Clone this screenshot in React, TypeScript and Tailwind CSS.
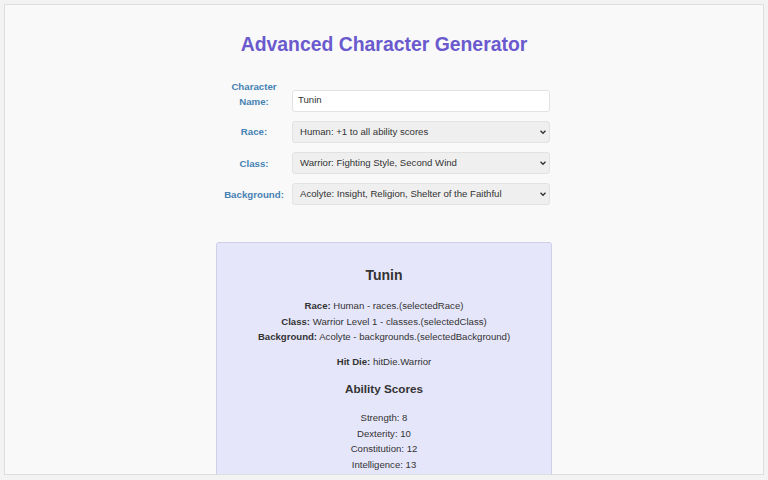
import React from "react";

const Chevron = () => (
  <svg width="8" height="8" viewBox="0 0 8 8" className="absolute right-[2px] top-1/2 -translate-y-1/2 pointer-events-none">
    <path d="M1.5 2.8 L4 5.2 L6.5 2.8" fill="none" stroke="#333" strokeWidth="1.4" />
  </svg>
);

function Row({ label, children, first }: { label: React.ReactNode; children: React.ReactNode; first?: boolean }) {
  return (
    <div className={first ? "flex items-end" : "flex items-center"}>
      <label className={`w-[70px] text-center font-bold text-[9.7px] leading-[15px] text-[#4682b4] ${first ? "mb-[2.5px]" : ""}`}>{label}</label>
      <div className="ml-[3px] w-[258px]">{children}</div>
    </div>
  );
}

function Select({ value }: { value: string }) {
  return (
    <div className="relative h-[22px] rounded-[3px] border border-[#e2e2e2] bg-[#efefef] flex items-center pl-[7px] text-[9.6px] text-[#333]">
      {value}
      <Chevron />
    </div>
  );
}

export default function App() {
  return (
    <div className="w-[768px] h-[480px] bg-[#f3f3f3] pt-[4px] px-[4px] font-['Liberation_Sans',Arial,sans-serif]">
      <div className="h-[471px] overflow-hidden border border-[#dedede] bg-[#f9f9f9] flex flex-col items-center">
        <h1 className="mt-[28px] text-[19.4px] font-bold text-[#6a5acd] leading-[23px]">Advanced Character Generator</h1>
        <div className="mt-[23px] w-[331px] flex flex-col gap-[9.3px] ml-[1px]">
          <Row first label={<>Character<br />Name:</>}>
            <div className="h-[22px] rounded-[3px] border border-[#e2e2e2] bg-white flex items-center pl-[5px] text-[9.6px] text-[#333]">Tunin</div>
          </Row>
          <Row label="Race:"><Select value="Human: +1 to all ability scores" /></Row>
          <Row label="Class:"><Select value="Warrior: Fighting Style, Second Wind" /></Row>
          <Row label="Background:"><Select value="Acolyte: Insight, Religion, Shelter of the Faithful" /></Row>
        </div>
        <div className="mt-[37px] w-[336px] shrink-0 rounded-[3px] border border-[#cfcfe8] bg-[#e6e6fa] flex flex-col items-center text-[9.6px] text-[#333] leading-[15.5px] pb-6">
          <h2 className="mt-[23px] text-[14px] font-bold leading-[18px]">Tunin</h2>
          <div className="mt-[14px] text-center">
            <p><b>Race:</b> Human - races.(selectedRace)</p>
            <p><b>Class:</b> Warrior Level 1 - classes.(selectedClass)</p>
            <p><b>Background:</b> Acolyte - backgrounds.(selectedBackground)</p>
          </div>
          <p className="mt-[9px]"><b>Hit Die:</b> hitDie.Warrior</p>
          <h3 className="mt-[13px] text-[11.7px] font-bold leading-[14px]">Ability Scores</h3>
          <div className="mt-[14px] text-center leading-[15.5px]">
            <p>Strength: 8</p>
            <p>Dexterity: 10</p>
            <p>Constitution: 12</p>
            <p>Intelligence: 13</p>
          </div>
        </div>
      </div>
    </div>
  );
}
